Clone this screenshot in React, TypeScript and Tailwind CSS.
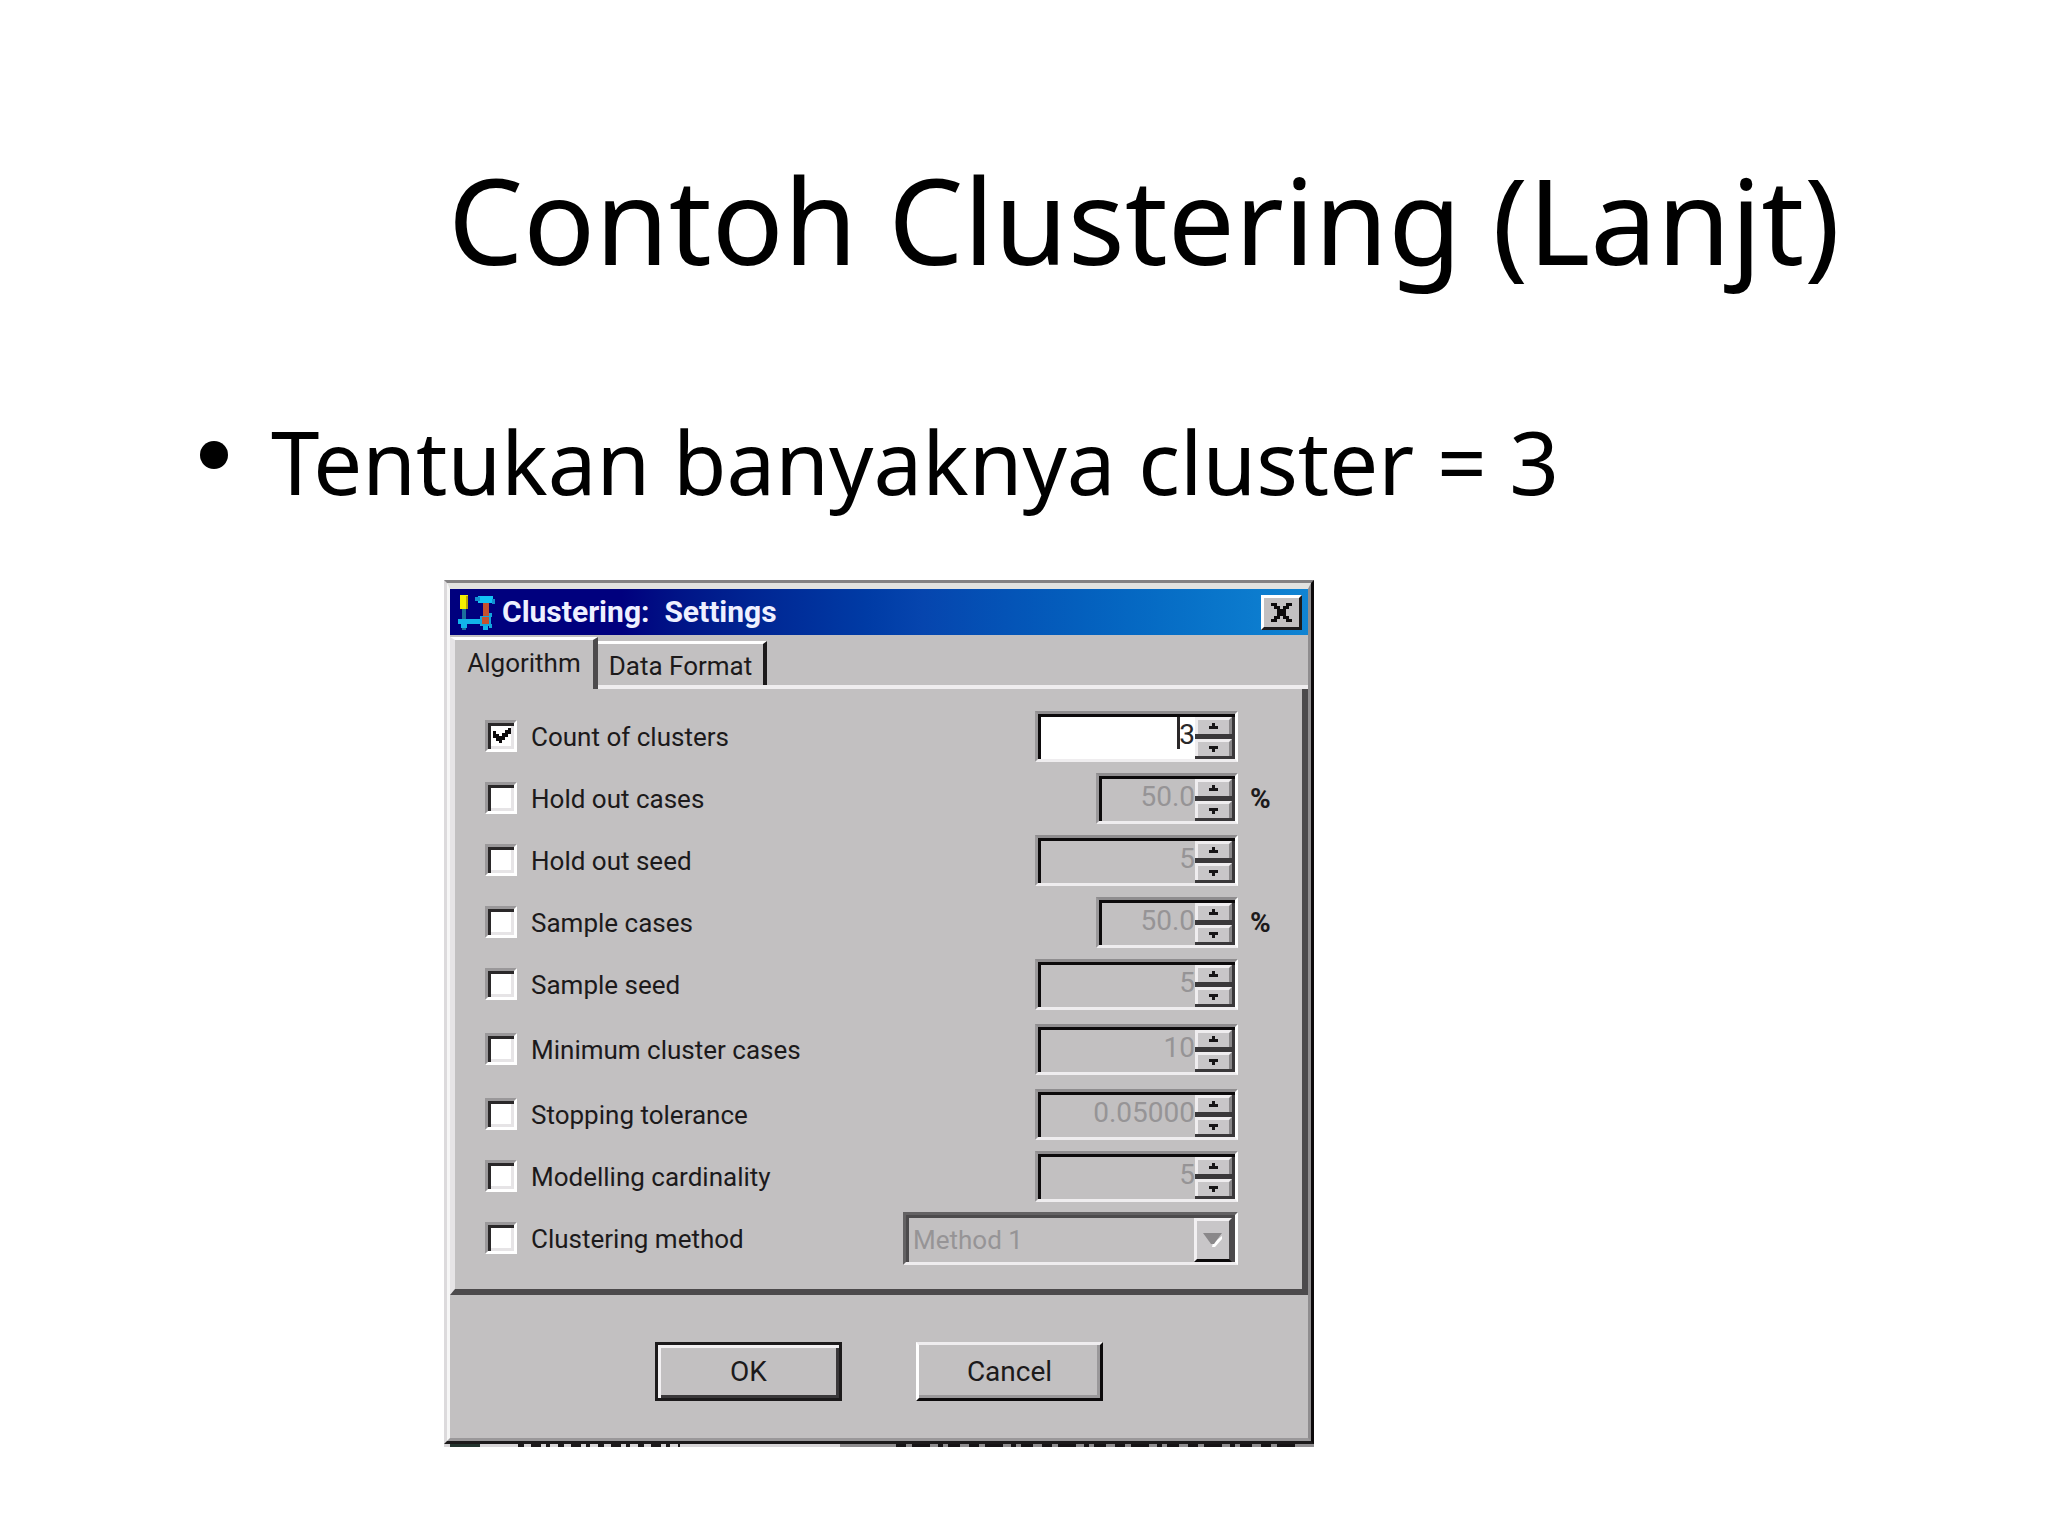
import { useState } from "react";

type Setting = {
  id: string;
  label: string;
  value: string;
  percent?: boolean;
  spaced?: boolean;
};

const settings: Setting[] = [
  { id: "count", label: "Count of clusters", value: "3" },
  { id: "holdout-cases", label: "Hold out cases", value: "50.0", percent: true },
  { id: "holdout-seed", label: "Hold out seed", value: "5" },
  { id: "sample-cases", label: "Sample cases", value: "50.0", percent: true },
  { id: "sample-seed", label: "Sample seed", value: "5" },
  { id: "min-cases", label: "Minimum cluster cases", value: "10", spaced: true },
  { id: "tolerance", label: "Stopping tolerance", value: "0.05000", spaced: true },
  { id: "cardinality", label: "Modelling cardinality", value: "5" },
];

function ToolIcon() {
  return (
    <svg viewBox="0 0 38 36" className="h-9 w-[38px] shrink-0" aria-hidden="true">
      <rect x="4" y="14" width="4" height="22" fill="#1c6f9c" />
      <rect x="2" y="1" width="8" height="14" fill="#f4f000" />
      <rect x="8" y="2" width="2" height="13" fill="#b9a800" />
      <rect x="0" y="25" width="24" height="5" fill="#12b4ea" />
      <rect x="3" y="29" width="6" height="5" fill="#12b4ea" />
      <rect x="20" y="2" width="15" height="7" fill="#12c2f5" />
      <rect x="17" y="3" width="5" height="4" fill="#138fd0" />
      <rect x="34" y="5" width="3" height="5" fill="#138fd0" />
      <rect x="25" y="9" width="6" height="15" fill="#c4512e" />
      <rect x="22" y="22" width="11" height="10" fill="#12a5dc" />
      <rect x="24" y="23" width="7" height="7" fill="#c4512e" />
      <rect x="25" y="32" width="5" height="4" fill="#12b4ea" />
      <rect x="31" y="19" width="3" height="4" fill="#12a5dc" />
      <rect x="31" y="30" width="3" height="4" fill="#12a5dc" />
    </svg>
  );
}

function CheckBox({ id, checked, onChange }: { id: string; checked: boolean; onChange: () => void }) {
  return (
    <span className="relative h-8 w-8 shrink-0">
      <input
        id={id}
        type="checkbox"
        checked={checked}
        onChange={onChange}
        className="block h-8 w-8 appearance-none border-[3px] border-t-[#9a989a] border-r-white border-b-white border-l-[#9a989a] bg-white shadow-[inset_3px_3px_0_#2a2829,inset_-3px_-3px_0_#e6e4e6]"
      />
      {checked && (
        <svg viewBox="0 0 32 32" className="pointer-events-none absolute inset-0" aria-hidden="true">
          <path d="M8 11h3v3h3v2h3v-3h3v-3h3V8h3v6h-3v3h-3v3h-3v3h-3v-2h-3v-3H8z" fill="#0c0a0b" />
        </svg>
      )}
    </span>
  );
}

function Spinner({ label }: { label: string }) {
  const face =
    "flex flex-1 items-center justify-center border-t-[3px] border-r-[3px] border-l-[3px] border-t-[#efedef] border-r-[#8a888a] border-l-[#efedef] bg-[#c8c6c8]";
  return (
    <span className="flex w-10 shrink-0 flex-col border-r-[3px] border-b-[3px] border-[#3a383a]">
      <button type="button" aria-label={"Increase " + label} className={face}>
        <svg viewBox="0 0 9 7" className="h-[7px] w-[9px]" aria-hidden="true">
          <path d="M3 0h3v3h3v3H0V3h3z" fill="#161416" />
        </svg>
      </button>
      <span className="h-[5px] bg-[#3a383a]" />
      <button type="button" aria-label={"Decrease " + label} className={face}>
        <svg viewBox="0 0 9 7" className="h-[7px] w-[9px]" aria-hidden="true">
          <path d="M0 1h9v3H6v3H3V4H0z" fill="#161416" />
        </svg>
      </button>
    </span>
  );
}

function SettingRow({ item }: { item: Setting }) {
  const [on, setOn] = useState(item.id === "count");
  const [value, setValue] = useState(item.value);
  return (
    <div className={item.spaced ? "mt-[3px] flex h-[62px] items-center" : "flex h-[62px] items-center"}>
      <CheckBox id={item.id} checked={on} onChange={() => setOn(!on)} />
      <label htmlFor={item.id} className="ml-3.5 flex-1 pt-0.5 whitespace-nowrap">
        {item.label}
      </label>
      <span
        className={
          (item.percent ? "w-[142px] " : "w-[203px] ") +
          (on ? "bg-white " : "bg-[#c2c0c1] ") +
          "relative flex h-[51px] shrink-0 border-[3px] border-t-[#8f8d8f] border-r-white border-b-[#efedef] border-l-[#9a989a]"
        }
      >
        <span className="flex min-w-0 flex-1 border-t-[3px] border-l-[3px] border-[#0c0a0b]">
          <input
            type="text"
            aria-label={item.label + " value"}
            value={value}
            disabled={!on}
            onChange={(e) => setValue(e.target.value)}
            className="min-w-0 flex-1 bg-transparent pb-1.5 text-right text-[28px] text-[#2a2829] disabled:text-[#969496]"
          />
          <Spinner label={item.label} />
        </span>
        {on && <span className="absolute top-[3px] right-[55px] h-8 w-[3px] bg-[#2a2829]" aria-hidden="true" />}
      </span>
      <span className="w-16 shrink-0 pt-0.5 pl-3 text-[28px] font-bold">{item.percent ? "%" : ""}</span>
    </div>
  );
}

function SettingsDialog() {
  const [methodOn, setMethodOn] = useState(false);
  return (
    <section
      aria-label="Clustering: Settings"
      className="border-[3px] border-t-[#838183] border-r-[#0c0a0b] border-b-[#1c1a1b] border-l-[#dcdadc] font-['Roboto',sans-serif] text-[26px] leading-8 text-[#1c1a1b]"
    >
      <div className="border-t-[6px] border-r-[3px] border-b-[3px] border-l-[3px] border-t-[#e2e2e0] border-r-[#8f8d8f] border-b-[#9a989a] border-l-[#f6f6f6] bg-[#c2c0c1]">
        <header className="flex h-[46px] items-center bg-linear-to-r from-[#00007e] from-20% via-[#0645ae] via-55% to-[#1084d3] pr-1.5 pl-2">
          <ToolIcon />
          <h2 className="ml-1.5 flex-1 text-[30px] font-bold whitespace-nowrap text-[#eef0ff]">Clustering:&nbsp; Settings</h2>
          <button
            type="button"
            aria-label="Close"
            className="flex h-[35px] w-[41px] items-center justify-center border-[3px] border-t-white border-r-[#1c1a1b] border-b-[#1c1a1b] border-l-white bg-[#c2c0c1]"
          >
            <svg viewBox="0 0 21 19" className="h-[19px] w-[21px]" aria-hidden="true">
              <path d="M0 0h6v3h3v3h3V3h3V0h6v3h-3v3h-3v7h3v3h3v3h-6v-3h-3v-3H9v3H6v3H0v-3h3v-3h3V6H3V3H0z" fill="#0c0a0b" />
            </svg>
          </button>
        </header>

        <div role="tablist" className="flex h-[54px] items-end">
          <button
            type="button"
            role="tab"
            aria-selected="true"
            className="h-[52px] w-[148px] border-t-[3px] border-r-[5px] border-l-[5px] border-t-white border-r-[#4c4a4c] border-l-[#e6e4e6] pb-1"
          >
            Algorithm
          </button>
          <div className="flex h-12 flex-1 items-end border-b-4 border-[#efedef]">
            <button
              type="button"
              role="tab"
              aria-selected="false"
              className="h-11 w-[169px] border-t-[3px] border-r-4 border-t-white border-r-[#1c1a1b] pt-0.5"
            >
              Data Format
            </button>
          </div>
        </div>

        <div className="border-r-[6px] border-b-[6px] border-l-[5px] border-r-[#4c4a4c] border-b-[#4c4a4c] border-l-[#e6e4e6] pt-4 pb-5 pl-[30px]">
          {settings.map((item) => (
            <SettingRow key={item.id} item={item} />
          ))}
          <div className="flex h-[62px] items-center">
            <CheckBox id="method" checked={methodOn} onChange={() => setMethodOn(!methodOn)} />
            <label htmlFor="method" className="ml-3.5 flex-1 pt-0.5 whitespace-nowrap">
              Clustering method
            </label>
            <span className="relative flex h-[53px] w-[335px] shrink-0 border-[3px] border-t-[#636163] border-r-white border-b-[#efedef] border-l-[#636163]">
              <select
                aria-label="Clustering method value"
                disabled
                className="flex-1 appearance-none border-t-[3px] border-r-[3px] border-l-[3px] border-[#4c4a4c] bg-[#c2c0c1] pl-1 text-[#969496] opacity-100"
              >
                <option>Method 1</option>
              </select>
              <span className="pointer-events-none absolute top-[3px] right-[3px] bottom-0 flex w-[38px] items-center justify-center border-[3px] border-t-[#f2f0f2] border-r-[#4c4a4c] border-b-[#0c0a0b] border-l-[#f2f0f2] bg-[#c8c6c8]">
                <svg viewBox="0 0 20 15" className="h-[15px] w-5" aria-hidden="true">
                  <path d="M19 4v3l-7 8h-3l1-4z" fill="#fff" />
                  <path d="M0 1h19l-8 11H8z" fill="#8a888a" />
                </svg>
              </span>
            </span>
            <span className="w-16 shrink-0" />
          </div>
        </div>

        <footer className="flex justify-center gap-[74px] pt-[47px] pb-[37px]">
          <button
            type="button"
            className="h-[59px] w-[187px] border-[3px] border-[#1c1a1b] text-[28px] shadow-[inset_3px_3px_0_#f2f0f2,inset_-3px_-3px_0_#3a383a]"
          >
            OK
          </button>
          <button
            type="button"
            className="h-[59px] w-[187px] border-[3px] border-t-[#efedef] border-r-[#0c0a0b] border-b-[#0c0a0b] border-l-white text-[28px] shadow-[inset_-3px_-3px_0_#9a989a]"
          >
            Cancel
          </button>
        </footer>
      </div>
    </section>
  );
}

export default function App() {
  return (
    <main className="min-h-screen bg-white pt-[136px] font-['Noto_Sans',sans-serif] text-black">
      <h1 className="pr-[208px] text-right text-[119px] leading-[166px] whitespace-nowrap">Contoh Clustering (Lanjt)</h1>
      <ul className="mt-[99px] pl-[200px] text-[87px] leading-[120px]">
        <li className="flex items-start whitespace-nowrap">
          <span className="mt-10 mr-[43px] h-7 w-7 rounded-full bg-black" aria-hidden="true" />
          Tentukan banyaknya cluster = 3
        </li>
      </ul>
      <div className="mt-[59px] grid grid-cols-[444fr_870fr_734fr]">
        <div className="col-start-2">
          <SettingsDialog />
          <svg viewBox="0 0 870 3" preserveAspectRatio="none" className="h-[3px] w-full" aria-hidden="true">
            <rect width="870" height="3" fill="#d8d6d8" />
            <path d="M6 1.5H36" stroke="#24352f" strokeWidth="3" />
            <path d="M74 1.5H236" stroke="#1c1a1b" strokeWidth="3" strokeDasharray="6 7 10 5 4 8" />
            <path d="M396 1.5H870" stroke="#8f8d8f" strokeWidth="3" />
            <path d="M452 1.5H858" stroke="#161416" strokeWidth="3" strokeDasharray="10 6 18 8 5 5 12 9" />
          </svg>
        </div>
      </div>
    </main>
  );
}
